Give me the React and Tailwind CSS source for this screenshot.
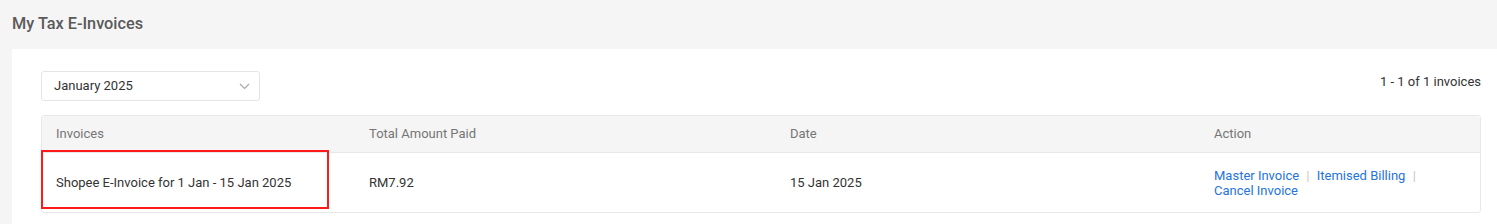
import React from 'react'

const font = { fontFamily: 'Roboto, "Liberation Sans", sans-serif' }

function Chevron() {
  return (
    <svg width="11" height="7" viewBox="0 0 11 7" fill="none">
      <path d="M1 1l4.5 4.5L10 1" stroke="#a8a8a8" strokeWidth="1.2" />
    </svg>
  )
}

export default function App() {
  return (
    <div className="w-[1497px] h-[224px] overflow-hidden bg-[#f5f5f5] pl-3" style={font}>
      {/* Title */}
      <div className="h-[49px] flex items-center">
        <h1 className="text-[16.3px] font-medium text-[#5a5a5a] leading-none">My Tax E-Invoices</h1>
      </div>

      {/* Card */}
      <div className="bg-white h-[175px] pl-[29px] pr-4 pt-[22px]">
        <div className="flex items-start justify-between">
          <div className="w-[219px] h-[30px] border border-[#e5e5e5] rounded-[3px] flex items-center justify-between pl-3 pr-[9px]">
            <span className="text-[13px] text-[#333]">January 2025</span>
            <Chevron />
          </div>
          <div className="text-[13px] text-[#333] pt-[1px]">1 - 1 of 1 invoices</div>
        </div>

        {/* Table */}
        <div className="relative mt-[14px] border border-[#e8e8e8] rounded-[3px]">
          <div className="grid grid-cols-[313px_421px_424px_1fr] h-[37px] items-center bg-[#f5f5f5] text-[13px] text-[#757575] border-b border-[#e8e8e8]">
            <div className="pl-[14px]">Invoices</div>
            <div className="pl-[14px]">Total Amount Paid</div>
            <div className="pl-[14px]">Date</div>
            <div className="pl-[14px]">Action</div>
          </div>
          <div className="grid grid-cols-[313px_421px_424px_1fr] h-[59px] items-center text-[13px] text-[#333]">
            <div className="pl-[14px]">Shopee E-Invoice for 1 Jan - 15 Jan 2025</div>
            <div className="pl-[14px]">RM7.92</div>
            <div className="pl-[14px]">15 Jan 2025</div>
            <div className="pl-[14px] w-[252px] leading-[15px] text-[#2673dd]">
              <span className="whitespace-nowrap">Master Invoice</span>{' '}
              <span className="text-[#c8c8c8] mx-[4px]">|</span>{' '}
              <span className="whitespace-nowrap">Itemised Billing</span>{' '}
              <span className="text-[#c8c8c8] mx-[4px]">|</span>{' '}
              <span className="whitespace-nowrap">Cancel Invoice</span>
            </div>
          </div>

          {/* highlight box */}
          <div className="absolute left-[-1px] top-[34px] w-[288px] h-[59px] border-2 border-[#ff1a1a] pointer-events-none" />
        </div>
      </div>
    </div>
  )
}
